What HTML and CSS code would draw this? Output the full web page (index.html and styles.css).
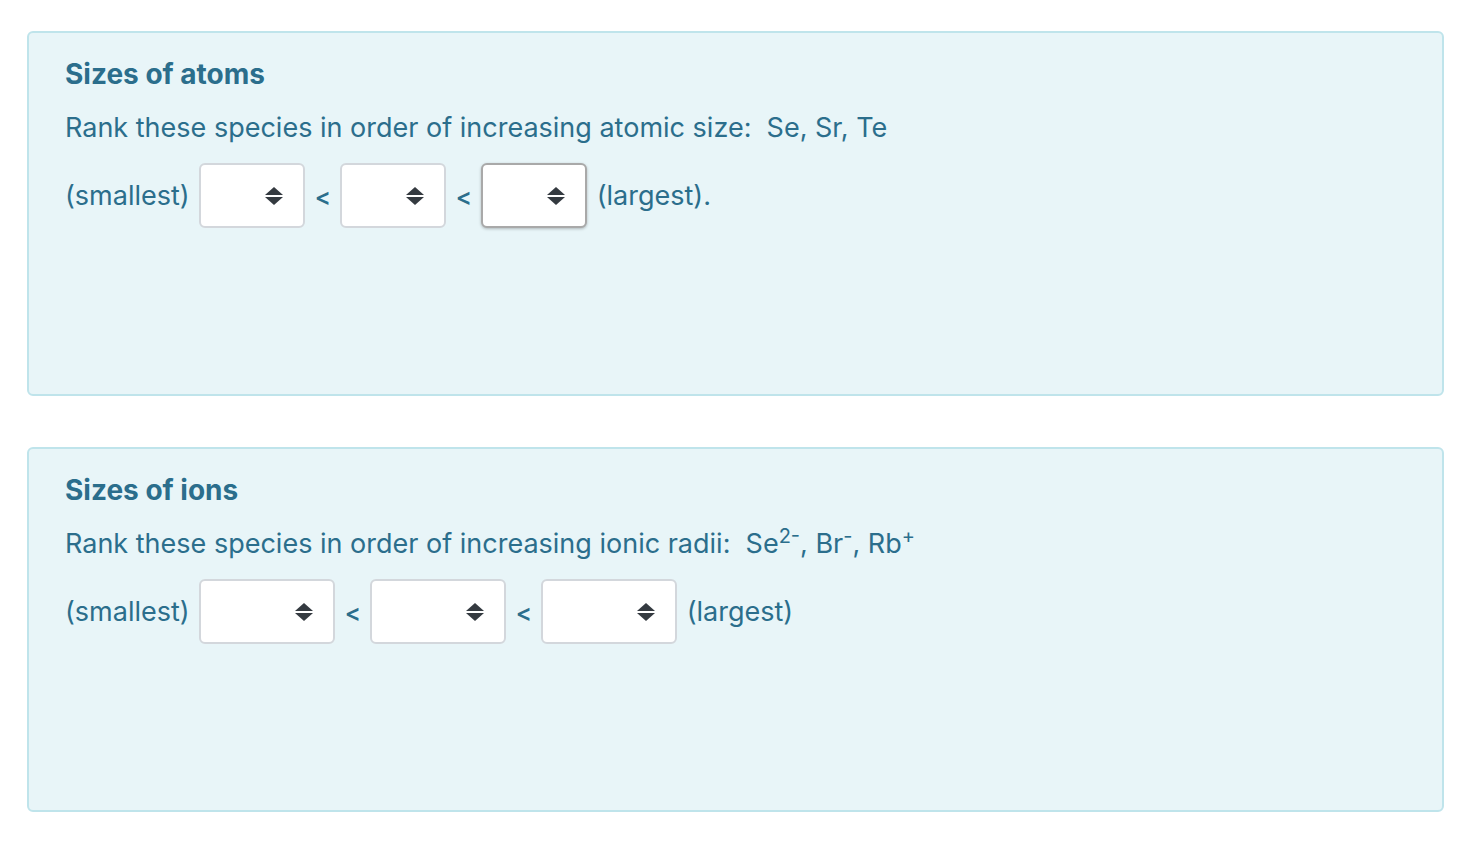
FILE: index.html
```html
<!DOCTYPE html>
<html lang="en">
	<head>
		<meta charset="UTF-8" />
		<meta
			name="viewport"
			content="width=device-width, initial-scale=1.0" />
		<title>Ranking sizes</title>

		<link rel="stylesheet" href="styles.css">
	</head>
	<body>
		<div class="card">
			<h3 class="card__title">Sizes of atoms</h3>
			<p class="card__text">Rank these species in order of increasing atomic size:&nbsp; Se, Sr, Te</p>
			<div class="rank">
				<span>(smallest)</span>
				<div class="pick"><span class="pick__arrows"></span></div>
				<span class="rank__sep">&lt;</span>
				<div class="pick"><span class="pick__arrows"></span></div>
				<span class="rank__sep">&lt;</span>
				<div class="pick pick--focus"><span class="pick__arrows"></span></div>
				<span>(largest).</span>
			</div>
		</div>

		<div class="card">
			<h3 class="card__title">Sizes of ions</h3>
			<p class="card__text">Rank these species in order of increasing ionic radii:&nbsp; Se<sup>2-</sup>, Br<sup>-</sup>, Rb<sup>+</sup></p>
			<div class="rank">
				<span>(smallest)</span>
				<div class="pick pick--wide"><span class="pick__arrows"></span></div>
				<span class="rank__sep">&lt;</span>
				<div class="pick pick--wide"><span class="pick__arrows"></span></div>
				<span class="rank__sep">&lt;</span>
				<div class="pick pick--wide"><span class="pick__arrows"></span></div>
				<span>(largest)</span>
			</div>
		</div>
	</body>
</html>
```

FILE: styles.css
```css
body {
	margin: 0;
	padding: 31px 26px 0 27px;
	background: #fff;
	font-family: Inter, "Open Sans", sans-serif;
	color: #2b6e8c;
}
.card {
	box-sizing: border-box;
	height: 365px;
	margin-bottom: 51px;
	padding: 23px 36px;
	background: #e8f5f8;
	border: 2px solid #bfe4eb;
	border-radius: 6px;
}
.card__title {
	margin: 0 0 18px;
	font-size: 28px;
	font-weight: 700;
	line-height: 36px;
}
.card__text {
	margin: 0 0 17px;
	font-size: 27px;
	line-height: 36px;
}
.card__text sup {
	font-size: 20px;
	line-height: 0;
	vertical-align: 0.5em;
}
.rank {
	display: flex;
	align-items: center;
	gap: 10px;
	font-size: 27px;
}
.rank > .pick:first-of-type {
	margin-left: -1px;
}
.rank__sep {
	width: 15px;
	font-size: 24px;
	font-weight: 600;
	margin-top: 1px;
}
.pick {
	box-sizing: border-box;
	flex-shrink: 0;
	width: 106px;
	height: 65px;
	background: #fff;
	border: 2px solid #d3d7dc;
	border-radius: 6px;
	display: flex;
	align-items: center;
	justify-content: flex-end;
	padding-right: 20px;
}
.pick--wide {
	width: 136px;
}
.pick--focus {
	border-color: #a9a9a9;
	box-shadow: 0 1px 3px rgba(0, 0, 0, 0.25);
}
.pick__arrows {
	display: flex;
	flex-direction: column;
	gap: 2px;
}
.pick__arrows::before,
.pick__arrows::after {
	content: "";
	border-left: 9px solid transparent;
	border-right: 9px solid transparent;
}
.pick__arrows::before {
	border-bottom: 8px solid #343a40;
}
.pick__arrows::after {
	border-top: 8px solid #343a40;
}
```
